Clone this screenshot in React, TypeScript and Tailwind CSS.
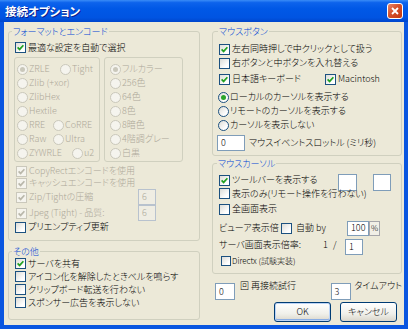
import React from "react";

type BoxProps = { checked?: boolean; disabled?: boolean; small?: boolean };

const Box = ({ checked, disabled, small }: BoxProps) => (
  <span
    className={`flex items-center justify-center shrink-0 border ${
      small ? "w-[10px] h-[10px]" : "w-[11px] h-[11px]"
    } ${
      disabled
        ? "border-[#CAC8BB] bg-[#F5F4EE]"
        : "border-[#1C5180] bg-[linear-gradient(135deg,#DCDCD7,#FFFFFF_75%)]"
    }`}
  >
    {checked && (
      <svg width="7" height="7" viewBox="0 0 7 7">
        <path
          d="M0.6 3.4 L2.6 5.4 L6.4 1.2"
          fill="none"
          stroke={disabled ? "#B9B7AA" : "#21A121"}
          strokeWidth="1.7"
        />
      </svg>
    )}
  </span>
);

const Dot = ({ checked, disabled }: BoxProps) => (
  <span
    className={`flex items-center justify-center shrink-0 w-[11px] h-[11px] rounded-full border ${
      disabled
        ? "border-[#CAC8BB] bg-[#F5F4EE]"
        : "border-[#1C5180] bg-[linear-gradient(135deg,#DCDCD7,#FFFFFF_75%)]"
    }`}
  >
    {checked && (
      <span
        className={`w-[5px] h-[5px] rounded-full ${
          disabled ? "bg-[#CAC8BB]" : "bg-[#2AA52A]"
        }`}
      />
    )}
  </span>
);

type ItemProps = {
  label: React.ReactNode;
  checked?: boolean;
  disabled?: boolean;
  className?: string;
};

const Check = ({ label, checked, disabled, className = "" }: ItemProps) => (
  <div className={`flex items-center gap-[2px] ${className}`}>
    <Box checked={checked} disabled={disabled} />
    <span className={`whitespace-nowrap ${disabled ? "text-[#ACA899]" : "text-black"}`}>
      {label}
    </span>
  </div>
);

const Radio = ({ label, checked, disabled, className = "" }: ItemProps) => (
  <div className={`flex items-center gap-[1px] ${className}`}>
    <Dot checked={checked} disabled={disabled} />
    <span className={`whitespace-nowrap ${disabled ? "text-[#ACA899]" : "text-black"}`}>
      {label}
    </span>
  </div>
);

const Field = ({
  value,
  disabled,
  className = "",
}: {
  value?: string;
  disabled?: boolean;
  className?: string;
}) => (
  <div
    className={`flex items-center pl-[3px] border shrink-0 ${
      disabled
        ? "border-[#B8C2CE] bg-[#EFEDE3] text-[#ACA899]"
        : "border-[#7F9DB9] bg-white text-black"
    } ${className}`}
  >
    {value}
  </div>
);

const Group = ({
  title,
  className = "",
  labelClass = "ml-[3px]",
  children,
}: {
  title?: string;
  className?: string;
  labelClass?: string;
  children: React.ReactNode;
}) => (
  <div className={`border border-[#D0D0BF] rounded-[3px] flex flex-col ${className}`}>
    <div
      className={`w-fit -mt-[6px] px-[1px] h-[12px] leading-[12px] bg-[#ECE9D8] text-[#0046D5] ${labelClass}`}
    >
      {title}
    </div>
    {children}
  </div>
);

const XpButton = ({ label, def }: { label: string; def?: boolean }) => (
  <div
    className={`w-[57px] h-[20px] flex items-center justify-center rounded-[3px] border border-[#003C74] bg-[linear-gradient(180deg,#FFFFFF,#F0F0EA_60%,#DAD6CB)] ${
      def ? "shadow-[inset_0_0_0_1px_#BCD4F6,inset_0_-1px_0_1px_#89ADE4]" : ""
    }`}
  >
    {label}
  </div>
);

export default function App() {
  return (
    <div className="w-[408px] h-[329px] flex flex-col bg-[#0A56E0] font-['Noto_Sans_CJK_JP','Liberation_Sans',sans-serif] font-light text-[9px] leading-[12px] [font-feature-settings:'palt'] text-black overflow-hidden">
      {/* title bar */}
      <div className="h-[22px] shrink-0 flex items-center pl-[5px] pr-[5px] bg-[linear-gradient(180deg,#3A8CF7_0%,#0D63EC_12%,#0058E6_40%,#0054E2_80%,#0046CC_100%)]">
        <span className="text-white font-bold text-[11.5px] [text-shadow:1px_1px_0_#0A1E8C]">
          接続オプション
        </span>
        <div className="ml-auto w-[16px] h-[16px] rounded-[3px] border border-white flex items-center justify-center bg-[linear-gradient(135deg,#E8866A,#D4502A_45%,#C3380F)]">
          <svg width="8" height="8" viewBox="0 0 8 8">
            <path d="M1 1 L7 7 M7 1 L1 7" stroke="white" strokeWidth="1.8" />
          </svg>
        </div>
      </div>

      {/* client area */}
      <div className="mx-[4px] h-[303px] bg-[#ECE9D8] flex pl-[4px] pt-[9px]">
        {/* left column */}
        <div className="w-[192px] flex flex-col">
          <Group title="フォーマットとエンコード" className="h-[210px]">
            <div className="h-[13px] mt-[3px] flex items-center ml-[6px]">
              <Check label="最適な設定を自動で選択" checked />
            </div>
            <div className="flex mt-[3px] ml-[5px] gap-[4px]">
              <div className="w-[86px] h-[105px] border border-[#D0D0BF] rounded-[3px] pt-[4px] pl-[2px] flex flex-col">
                <div className="h-[14px] flex items-center">
                  <Radio label="ZRLE" checked disabled className="w-[43px]" />
                  <Radio label="Tight" disabled />
                </div>
                <div className="h-[14px] flex items-center">
                  <Radio label="Zlib (+xor)" disabled />
                </div>
                <div className="h-[14px] flex items-center">
                  <Radio label="ZlibHex" disabled />
                </div>
                <div className="h-[14px] flex items-center">
                  <Radio label="Hextile" disabled />
                </div>
                <div className="h-[14px] flex items-center">
                  <Radio label="RRE" disabled className="w-[36px]" />
                  <Radio label="CoRRE" disabled />
                </div>
                <div className="h-[14px] flex items-center">
                  <Radio label="Raw" disabled className="w-[36px]" />
                  <Radio label="Ultra" disabled />
                </div>
                <div className="h-[14px] flex items-center">
                  <Radio label="ZYWRLE" disabled className="w-[55px]" />
                  <Radio label="u2" disabled />
                </div>
              </div>
              <div className="w-[79px] h-[105px] border border-[#D0D0BF] rounded-[3px] pt-[4px] pl-[5px] flex flex-col">
                <div className="h-[14px] flex items-center">
                  <Radio label="フルカラー" checked disabled />
                </div>
                <div className="h-[14px] flex items-center">
                  <Radio label="256色" disabled />
                </div>
                <div className="h-[14px] flex items-center">
                  <Radio label="64色" disabled />
                </div>
                <div className="h-[14px] flex items-center">
                  <Radio label="8色" disabled />
                </div>
                <div className="h-[14px] flex items-center">
                  <Radio label="8暗色" disabled />
                </div>
                <div className="h-[14px] flex items-center">
                  <Radio label="4階調グレー" disabled />
                </div>
                <div className="h-[14px] flex items-center">
                  <Radio label="白黒" disabled />
                </div>
              </div>
            </div>
            <div className="h-[12px] mt-[3px] flex items-center ml-[7px]">
              <Check label="CopyRectエンコードを使用" checked disabled />
            </div>
            <div className="h-[12px] flex items-center ml-[7px]">
              <Check label="キャッシュエンコードを使用" checked disabled />
            </div>
            <div className="h-[16px] flex items-center ml-[7px]">
              <Check label="Zip/Tightの圧縮" checked disabled className="w-[122px]" />
              <Field value="6" disabled className="w-[18px] h-[16px]" />
            </div>
            <div className="h-[16px] flex items-center ml-[7px]">
              <Check label="Jpeg (Tight) - 品質:" checked disabled className="w-[122px]" />
              <Field value="6" disabled className="w-[18px] h-[16px]" />
            </div>
            <div className="h-[12px] flex items-center ml-[6px]">
              <Check label="プリエンプティブ更新" />
            </div>
          </Group>

          <Group title="その他" className="h-[69px] mt-[10px]">
            <div className="h-[13px] -mt-[1px] flex items-center ml-[6px]">
              <Check label="サーバを共有" checked />
            </div>
            <div className="h-[13px] flex items-center ml-[6px]">
              <Check label="アイコン化を解除したときベルを鳴らす" />
            </div>
            <div className="h-[13px] flex items-center ml-[6px]">
              <Check label="クリップボード転送を行わない" />
            </div>
            <div className="h-[13px] flex items-center ml-[6px]">
              <Check label="スポンサー広告を表示しない" />
            </div>
          </Group>
        </div>

        {/* right column */}
        <div className="w-[190px] ml-[12px] flex flex-col">
          <Group title="マウスボタン" className="h-[125px]" labelClass="ml-[5px]">
            <div className="h-[14px] mt-[4px] flex items-center ml-[6px]">
              <Check label="左右同時押しで中クリックとして扱う" checked />
            </div>
            <div className="h-[14px] flex items-center ml-[6px]">
              <Check label="右ボタンと中ボタンを入れ替える" />
            </div>
            <div className="h-[14px] mt-[2px] flex items-center ml-[6px]">
              <Check label="日本語キーボード" checked className="w-[106px]" />
              <Check label="Macintosh" checked />
            </div>
            <div className="h-[14px] mt-[4px] flex items-center ml-[5px]">
              <Radio label="ローカルのカーソルを表示する" checked />
            </div>
            <div className="h-[14px] flex items-center ml-[5px]">
              <Radio label="リモートのカーソルを表示する" />
            </div>
            <div className="h-[14px] flex items-center ml-[5px]">
              <Radio label="カーソルを表示しない" />
            </div>
            <div className="h-[16px] mt-[3px] flex items-center ml-[4px]">
              <Field value="0" className="w-[28px] h-[16px]" />
              <span className="ml-[4px] whitespace-nowrap">マウスイベントスロットル (ミリ秒)</span>
            </div>
          </Group>

          <Group title="マウスカーソル" className="h-[111px] mt-[7px]" labelClass="ml-[4px]">
            <div className="h-[14px] mt-[3px] flex items-center ml-[6px]">
              <Check label="ツールバーを表示する" checked className="w-[119px]" />
              <Field className="w-[19px] h-[17px] mt-[4px]" />
              <Field className="w-[18px] h-[17px] mt-[4px] ml-[16px]" />
            </div>
            <div className="h-[13px] flex items-center ml-[6px]">
              <Check label="表示のみ(リモート操作を行わない)" />
            </div>
            <div className="h-[14px] mt-[2px] flex items-center ml-[6px]">
              <Check label="全画面表示" />
            </div>
            <div className="h-[16px] mt-[4px] flex items-center ml-[6px]">
              <span className="w-[62px] whitespace-nowrap">ビューア表示倍</span>
              <Check label="自動 by" className="w-[66px] gap-[4px]" />
              <Field value="100" className="w-[22px] h-[15px]" />
              <div className="w-[11px] h-[15px] border border-[#A7A6AA] bg-[#F1EFE6] flex items-center justify-center text-[8px]">
                %
              </div>
            </div>
            <div className="h-[16px] mt-[1px] flex items-center ml-[6px]">
              <span className="w-[104px] whitespace-nowrap">サーバ画面表示倍率:</span>
              <span className="w-[10px]">1</span>
              <span className="w-[12px]">/</span>
              <Field value="1" className="w-[18px] h-[16px] mt-[4px]" />
            </div>
            <div className="h-[12px] mt-[2px] flex items-center gap-[1px] ml-[8px] text-[8px]">
              <Box small />
              <span className="whitespace-nowrap">Directx (試験実装)</span>
            </div>
          </Group>

          <div className="mt-[6px] h-[20px] flex items-start">
            <Field value="0" className="w-[20px] h-[17px] mt-[3px] ml-[3px]" />
            <span className="ml-[5px] w-[93px] whitespace-nowrap">回 再接続試行</span>
            <Field value="3" className="w-[20px] h-[17px] mt-[3px]" />
            <span className="ml-[4px] whitespace-nowrap">タイムアウト</span>
          </div>
          <div className="mt-[2px] flex gap-[9px] ml-[62px]">
            <XpButton label="OK" def />
            <XpButton label="キャンセル" />
          </div>
        </div>
      </div>
    </div>
  );
}
